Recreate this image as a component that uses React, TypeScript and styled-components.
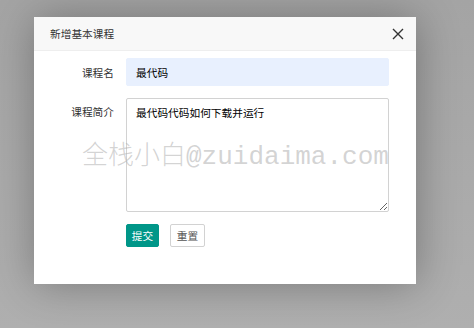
import styled, { createGlobalStyle } from "styled-components";

const GlobalStyle = createGlobalStyle`
  html, body {
    margin: 0;
    padding: 0;
    background: #ababab;
    font-family: "Noto Sans CJK SC", "Noto Sans", sans-serif;
  }
`;

const Screen = styled.div`
  width: 474px;
  height: 328px;
  padding: 17px 0 0 34px;
  box-sizing: border-box;
  background: linear-gradient(180deg, #a4a4a4 0%, #afafaf 100%);
  overflow: hidden;
`;

const Dialog = styled.div`
  position: relative;
  width: 382px;
  height: 267px;
  background: #fff;
  box-shadow: 1px 1px 40px rgba(0, 0, 0, 0.3);
`;

const Header = styled.div`
  display: flex;
  align-items: center;
  justify-content: space-between;
  height: 33px;
  padding: 0 12px 0 16px;
  background: #f8f8f8;
  border-bottom: 1px solid #eee;
  color: #333;
  font-size: 10.7px;
`;

const Close = styled.button`
  display: flex;
  padding: 0;
  border: 0;
  background: none;
  color: #333;
  cursor: pointer;
`;

const Form = styled.div`
  display: flex;
  flex-direction: column;
  gap: 12px;
  padding-top: 7px;
`;

const Row = styled.div<{ $top?: boolean }>`
  display: flex;
  align-items: ${({ $top }) => ($top ? "flex-start" : "center")};
`;

const Label = styled.label<{ $top?: boolean }>`
  width: 80px;
  margin-right: 12px;
  text-align: right;
  color: #333;
  font-size: 10.7px;
  padding-top: ${({ $top }) => ($top ? "6px" : "0")};
`;

const Input = styled.input`
  width: 263px;
  height: 28px;
  box-sizing: border-box;
  padding: 0 9px;
  border: 1px solid #e8f0fe;
  border-radius: 2px;
  background: #e8f0fe;
  color: #000;
  font-family: inherit;
  font-size: 10.7px;
  outline: none;
`;

const TextArea = styled.textarea`
  width: 263px;
  height: 114px;
  box-sizing: border-box;
  padding: 5px 9px;
  border: 1px solid #d2d2d2;
  border-radius: 2px;
  background: #fff;
  color: #000;
  font-family: inherit;
  font-size: 10.7px;
  line-height: 18px;
  outline: none;
  resize: both;
`;

const Buttons = styled.div`
  display: flex;
  gap: 11px;
  padding-left: 92px;
`;

const Button = styled.button<{ $primary?: boolean }>`
  width: ${({ $primary }) => ($primary ? "33px" : "35px")};
  height: 23px;
  padding: 0;
  border: 1px solid ${({ $primary }) => ($primary ? "#009688" : "#d2d2d2")};
  border-radius: 2px;
  background: ${({ $primary }) => ($primary ? "#009688" : "#fff")};
  color: ${({ $primary }) => ($primary ? "#fff" : "#555")};
  font-family: inherit;
  font-size: 10.7px;
  cursor: pointer;
`;

const Watermark = styled.div`
  position: absolute;
  left: 48px;
  top: 121px;
  color: rgba(175, 175, 175, 0.55);
  font-size: 26px;
  line-height: 30px;
  white-space: nowrap;
  pointer-events: none;
  font-family: "Liberation Mono", "Noto Sans CJK SC", monospace;
`;

const Zh = styled.span`
  font-family: "Noto Sans CJK SC", serif;
  font-weight: 300;
`;

export default function App() {
  return (
    <>
      <GlobalStyle />
      <Screen>
        <Dialog>
          <Header>
            新增基本课程
            <Close>
              <svg width="12" height="12" viewBox="0 0 12 12">
                <path d="M1 1 L11 11 M11 1 L1 11" stroke="#333" strokeWidth="1.4" />
              </svg>
            </Close>
          </Header>
          <Form>
            <Row>
              <Label>课程名</Label>
              <Input defaultValue="最代码" />
            </Row>
            <Row $top>
              <Label $top>课程简介</Label>
              <TextArea defaultValue="最代码代码如何下载并运行" />
            </Row>
            <Buttons>
              <Button $primary>提交</Button>
              <Button>重置</Button>
            </Buttons>
          </Form>
          <Watermark>
            <Zh>全栈小白</Zh>@zuidaima.com
          </Watermark>
        </Dialog>
      </Screen>
    </>
  );
}
